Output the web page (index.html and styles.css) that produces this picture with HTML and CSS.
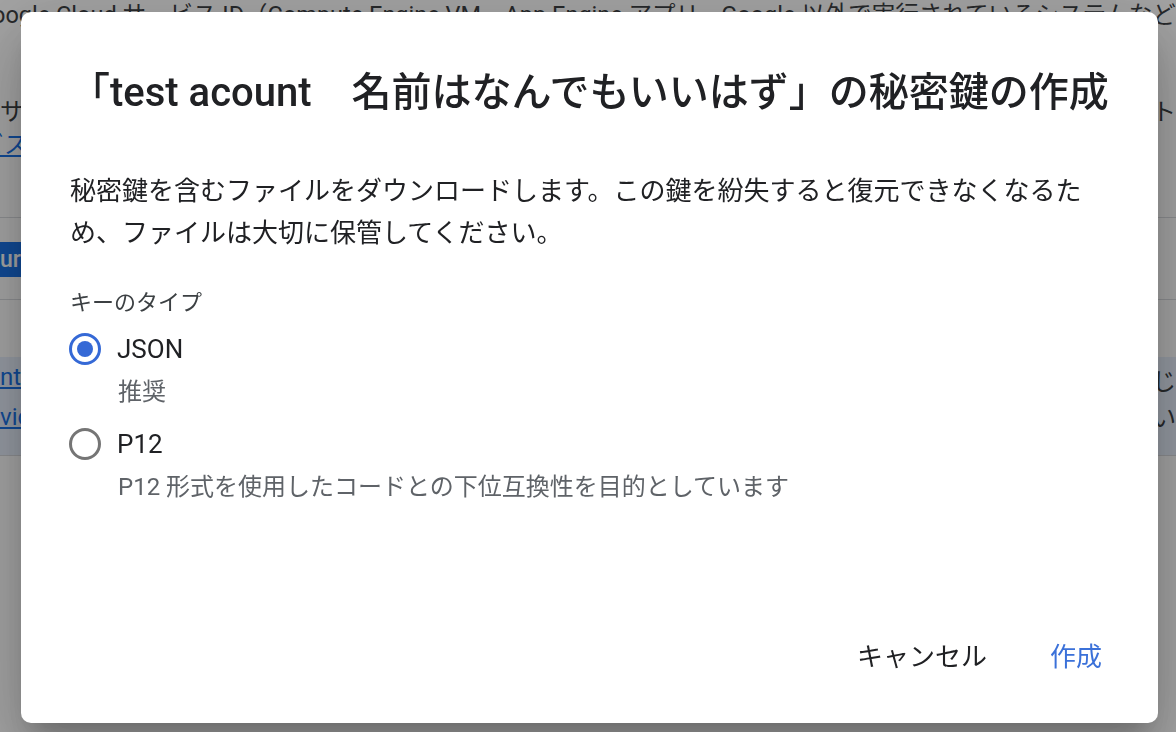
FILE: index.html
```html
<!DOCTYPE html>
<html lang="ja">
<head>
  <meta charset="utf-8" />
  <title>秘密鍵の作成</title>
  <meta name="viewport" content="width=device-width, initial-scale=1.0">
  <link rel="stylesheet" href="styles.css">
</head>
<body>
  <div class="page">
    <p class="lead">Google Cloud サービス ID（Compute Engine VM、App Engine アプリ、Google 以外で実行されているシステムなど）を表します。</p>
    <div class="split intro">
      <span>サービス アカウント</span>
      <span>ト</span>
    </div>
    <div class="split">
      <a class="doc-link" href="#">ビス アカウントの詳細</a>
    </div>
    <div class="toolbar">
      <span class="btn-primary">ur</span>
    </div>
    <div class="table-head"></div>
    <div class="table-row">
      <div class="cell-links">
        <a href="#">nt@test-acount.iam</a>
        <a href="#">vice.gserviceaccount.com</a>
      </div>
      <div class="cell-text">
        <span>じ</span>
        <span>い</span>
      </div>
    </div>
  </div>

  <div class="scrim">
    <div class="dialog">
      <h2 class="dialog-title">「test acount　名前はなんでもいいはず」の秘密鍵の作成</h2>
      <p class="dialog-text">秘密鍵を含むファイルをダウンロードします。この鍵を紛失すると復元できなくなるため、ファイルは大切に保管してください。</p>

      <div class="field-label">キーのタイプ</div>
      <div class="option">
        <span class="radio checked"></span>
        <span class="option-label">JSON</span>
      </div>
      <div class="option-hint">推奨</div>
      <div class="option">
        <span class="radio"></span>
        <span class="option-label">P12</span>
      </div>
      <div class="option-hint">P12 形式を使用したコードとの下位互換性を目的としています</div>

      <div class="actions">
        <button class="btn">キャンセル</button>
        <button class="btn btn-accent">作成</button>
      </div>
    </div>
  </div>
</body>
</html>
```

FILE: styles.css
```css
* {
  box-sizing: border-box;
}
body {
  margin: 0;
  font-family: Roboto, "Noto Sans CJK JP", sans-serif;
  color: #3c4043;
  background: #fff;
  overflow: hidden;
}

/* page behind the dialog */
.page {
  height: 732px;
  overflow: hidden;
  font-size: 24px;
}
.lead {
  margin: 0;
  font-size: 23.5px;
  line-height: 30px;
  white-space: nowrap;
  text-indent: -24px;
}
.split {
  display: flex;
  justify-content: space-between;
  white-space: nowrap;
  line-height: 28px;
}
.intro {
  margin-top: 68px;
}
.split + .split {
  margin-top: 5px;
}
.doc-link {
  color: #1a73e8;
  text-indent: -20px;
  display: block;
}
.page a {
  color: #1a73e8;
}
.toolbar {
  margin-top: 58px;
  border-top: 1px solid #dadce0;
  border-bottom: 1px solid #dadce0;
  padding: 24px 0 22px;
}
.btn-primary {
  display: block;
  width: 120px;
  height: 35px;
  line-height: 35px;
  background: #1a73e8;
  color: #fff;
  font-weight: 500;
  font-size: 23px;
}
.table-head {
  height: 57px;
}
.table-row {
  display: flex;
  justify-content: space-between;
  background: #e8f0fe;
  border-bottom: 1px solid #dadce0;
  height: 99px;
}
.cell-links {
  display: flex;
  flex-direction: column;
  line-height: 40px;
  white-space: nowrap;
}
.cell-text {
  display: flex;
  flex-direction: column;
  padding-top: 7px;
  line-height: 36px;
  color: #3c4043;
}

/* dialog */
.scrim {
  position: fixed;
  inset: 0;
  background: rgba(0, 0, 0, 0.36);
  display: flex;
  padding: 12px 18px 9px 21px;
}
.dialog {
  flex: 1;
  display: flex;
  flex-direction: column;
  background: #fff;
  border-radius: 10px;
  padding: 0 0 41px 49px;
  box-shadow: 0 18px 24px -11px rgba(0, 0, 0, 0.2),
              0 38px 60px 5px rgba(0, 0, 0, 0.14),
              0 14px 74px 13px rgba(0, 0, 0, 0.12);
}
.dialog-title {
  margin: 57px 0 0;
  font-size: 40px;
  line-height: 48px;
  font-weight: 500;
  color: #202124;
  white-space: nowrap;
}
.dialog-text {
  margin: 53px 0 0;
  padding-right: 60px;
  font-size: 26px;
  line-height: 42px;
  color: #202124;
}
.field-label {
  margin-top: 33px;
  font-size: 22px;
  line-height: 32px;
  color: #3c4043;
}
.option {
  display: flex;
  align-items: center;
  gap: 16px;
  height: 40px;
  margin-top: 10px;
  margin-left: -1px;
}
.option-hint + .option {
  margin-top: 16px;
}
.radio {
  position: relative;
  width: 32px;
  height: 32px;
  border: 3.5px solid #757575;
  border-radius: 50%;
}
.radio.checked {
  border-color: #3569d6;
}
.radio.checked::after {
  content: "";
  position: absolute;
  left: 4.5px;
  top: 4.5px;
  width: 16px;
  height: 16px;
  border-radius: 50%;
  background: #3569d6;
}
.option-label {
  font-size: 26px;
  color: #202124;
}
.option-hint {
  margin-top: 7px;
  padding-left: 48px;
  font-size: 24px;
  line-height: 32px;
  color: #5f6368;
}
.actions {
  margin-top: auto;
  display: flex;
  justify-content: flex-end;
  gap: 11px;
  padding-right: 30px;
}
.btn {
  height: 56px;
  padding: 0 26px;
  border: none;
  background: none;
  font-family: inherit;
  font-size: 26px;
  font-weight: 400;
  color: #202124;
}
.btn-accent {
  color: #3b71d9;
}
```
